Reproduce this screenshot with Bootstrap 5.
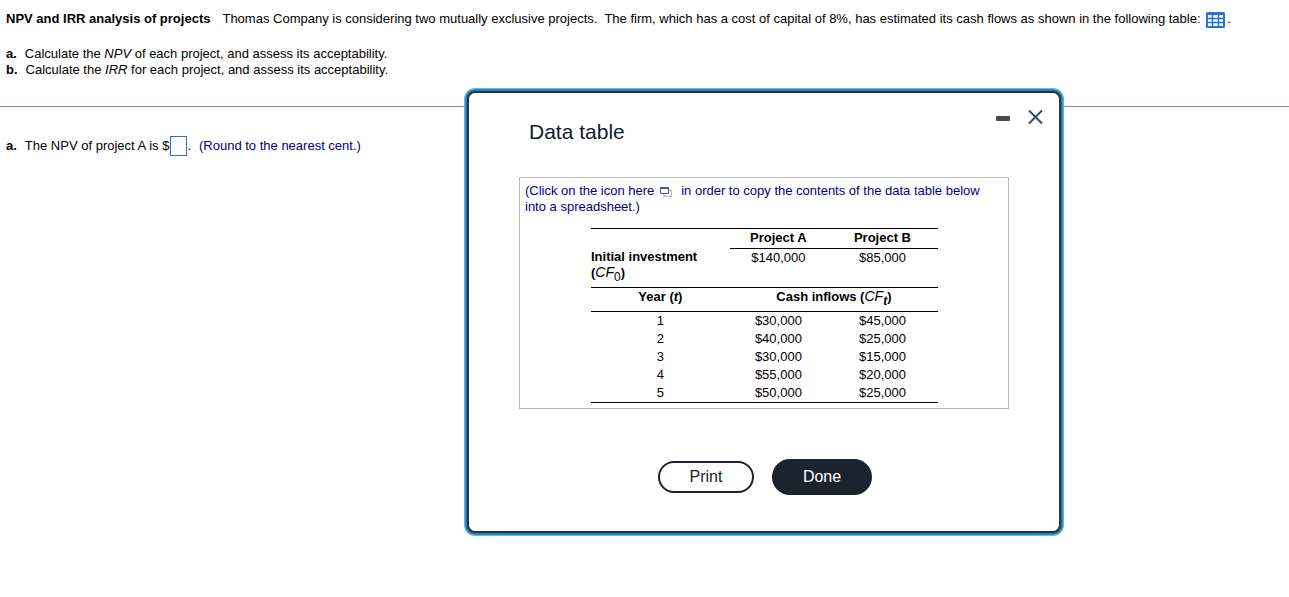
<!DOCTYPE html>
<html lang="en">
<head>
<meta charset="utf-8">
<meta name="viewport" content="width=device-width, initial-scale=1">
<title>NPV and IRR analysis of projects</title>
<link href="https://cdn.jsdelivr.net/npm/bootstrap@5.3.0/dist/css/bootstrap.min.css" rel="stylesheet">
<style>
  body { font: 13px/16px "Liberation Sans", Arial, sans-serif; color: #000; background: #fff; }
  .question { padding: 11px 6px 28px; border-bottom: 1px solid #7d8fa9; }
  .intro b { margin-right: 12px; }
  .parts { margin-top: 18px; }
  .letter { margin-right: 8px; }
  .answer { padding: 29px 6px; }
  .answer-box { width: 17px; height: 20px; border: 1px solid #2f6bd0; border-radius: 0; padding: 0; margin-left: 1px; font-size: 13px; }
  .navy { color: #000080; }
  .hint { margin-left: 8px; }
  .icon-btn { border: 0; padding: 0; background: none; line-height: 0; }
  .inline-icon { margin: 0 2px; }
  .dialog-window { top: 91px; left: 467px; width: 594px; padding: 14px 16px 36px 50px; background: #fff; border: 2px solid #333; border-radius: 8px; box-shadow: 0 0 0 1px #177fb5, 0 0 0 2px #1f93d0, 0 0 0 3px #5fb9e6; }
  .dialog-title { font-size: 21px; line-height: 24px; font-weight: 400; color: #111b2e; margin: 13px 0 0 10px; }
  .window-tools { gap: 18px; padding-top: 2px; }
  .sheet { margin: 33px 34px 0 0; padding: 5px; border: 1px solid #b7b7b7; }
  .copy-note { padding-right: 20px; }
  .figures { width: 347px; margin: 13px 0 0 66px; border-collapse: collapse; line-height: 16px; }
  .figures th, .figures td { padding: 1px 0; text-align: center; vertical-align: top; }
  .figures .rule-top > * { border-top: 1px solid #000; }
  .figures .rule-top > .plain { border-top: 0; padding-top: 0; }
  .figures .investment > * { padding-bottom: 6px; }
  .figures .heads > * { padding-bottom: 2px; }
  .figures .year-head th { padding-bottom: 6px; }
  .figures tbody:last-child { border-bottom: 1px solid #000; }
  .figures sub { font-size: 12px; line-height: 0; bottom: -4px; }
  .symbol { font-size: 14px; line-height: 1; font-weight: 400; }
  .actions { gap: 18px; margin: 50px 32px 0 0; }
  .pill { border: 2px solid #1c222e; border-radius: 18px; padding: 0; font-size: 16px; line-height: 28px; color: #1c222e; background: #fff; width: 96px; }
  .pill-dark { width: 100px; line-height: 32px; background: #1c222e; color: #fff; }
</style>
</head>
<body>
<main>
  <section class="question">
    <p class="intro mb-0"><b>NPV and IRR analysis of projects</b>Thomas Company is considering two mutually exclusive projects.&nbsp; The firm, which has a cost of capital of 8%, has estimated its cash flows as shown in the following table:
      <button type="button" class="icon-btn inline-icon align-middle" aria-label="Show data table"><svg width="19" height="16" viewBox="0 0 19 16"><rect width="19" height="16" rx="1.500" fill="#2474d8"/><path fill="#fff" d="M2 3h4v3H2zm5 0h5v3H7zm6 0h4v3h-4zM2 7h4v3H2zm5 0h5v3H7zm6 0h4v3h-4zM2 11h4v3H2zm5 0h5v3H7zm6 0h4v3h-4z"/><path d="M6.500 3v11M12.500 3v11M2 6.500h15M2 10.500h15" stroke="#2474d8" stroke-width="1.500"/></svg></button>.</p>
    <div class="parts">
      <div><b class="letter">a.</b>Calculate the <i>NPV</i> of each project, and assess its acceptability.</div>
      <div><b class="letter">b.</b>Calculate the <i>IRR</i> for each project, and assess its acceptability.</div>
    </div>
  </section>
  <section class="answer d-flex align-items-center">
    <b class="letter">a.</b><label for="npvA">The NPV of project A is $</label><input id="npvA" type="text" class="answer-box">.<span class="hint navy">(Round to the nearest cent.)</span>
  </section>
</main>

<div class="dialog-window position-absolute" role="dialog" aria-labelledby="dialogTitle">
  <header class="d-flex justify-content-between align-items-start">
    <h1 class="dialog-title" id="dialogTitle">Data table</h1>
    <div class="window-tools d-flex">
      <button type="button" class="icon-btn" aria-label="Minimize"><svg width="14" height="16" viewBox="0 0 14 16"><rect y="7" width="14" height="5" rx="1" fill="#4a4a4a"/></svg></button>
      <button type="button" class="icon-btn" aria-label="Close"><svg width="15" height="16" viewBox="0 0 15 16"><path d="M1 1.500l13 13M14 1.500l-13 13" stroke="#3d4a5c" stroke-width="2" fill="none"/></svg></button>
    </div>
  </header>
  <div class="sheet">
    <div class="copy-note navy">(Click on the icon here <button type="button" class="icon-btn inline-icon align-middle" aria-label="Copy table"><svg width="12" height="10" viewBox="0 0 12 10"><path d="M4 3.500h7.500v6H4z" fill="#fff" stroke="#b4bbdc" stroke-width="1.500"/><path d="M.5.500h8v6h-8z" fill="#fff" stroke="#4656a6"/><path d="M0 0h9v2H0z" fill="#4656a6"/></svg></button>&nbsp; in order to copy the contents of the data table below into a spreadsheet.)</div>
    <table class="figures">
      <colgroup><col style="width:40%"><col style="width:28%"><col style="width:32%"></colgroup>
      <tbody>
        <tr class="rule-top heads"><td></td><th>Project A</th><th>Project B</th></tr>
        <tr class="rule-top investment"><th class="plain text-start">Initial investment<br>(<span class="symbol"><i>CF</i><sub>0</sub></span>)</th><td>$140,000</td><td>$85,000</td></tr>
      </tbody>
      <tbody>
        <tr class="rule-top year-head"><th>Year (<i>t</i>)</th><th colspan="2">Cash inflows (<i class="symbol">CF</i><i><sub>t</sub></i>)</th></tr>
      </tbody>
      <tbody>
        <tr class="rule-top"><td>1</td><td>$30,000</td><td>$45,000</td></tr>
        <tr><td>2</td><td>$40,000</td><td>$25,000</td></tr>
        <tr><td>3</td><td>$30,000</td><td>$15,000</td></tr>
        <tr><td>4</td><td>$55,000</td><td>$20,000</td></tr>
        <tr><td>5</td><td>$50,000</td><td>$25,000</td></tr>
      </tbody>
    </table>
  </div>
  <div class="actions d-flex justify-content-center align-items-center">
    <button type="button" class="pill">Print</button>
    <button type="button" class="pill pill-dark">Done</button>
  </div>
</div>
<script src="https://cdn.jsdelivr.net/npm/bootstrap@5.3.0/dist/js/bootstrap.bundle.min.js"></script>
</body>
</html>
